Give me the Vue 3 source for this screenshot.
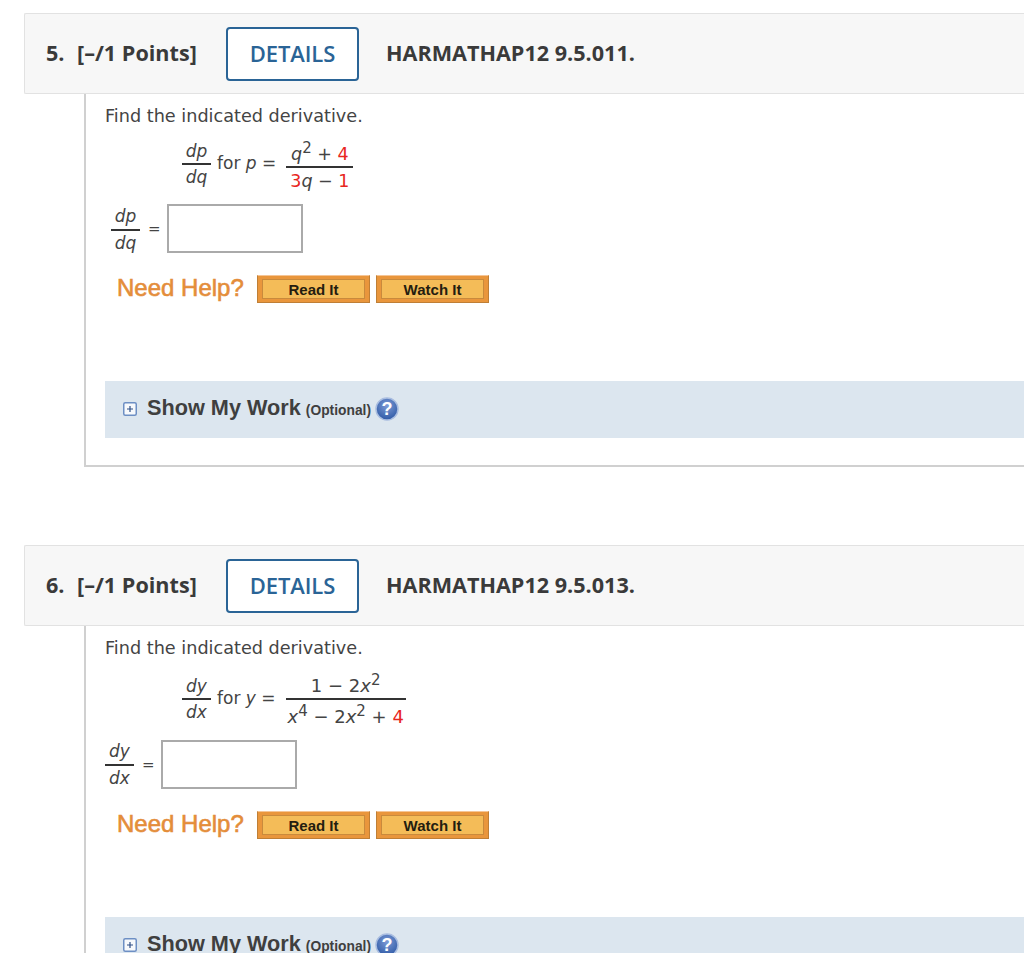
<script setup>
const questions = [
  {
    num: '5.', code: 'HARMATHAP12 9.5.011.', top: 'dp', bottom: 'dq', name: 'p',
    numer: '<i>q</i><sup>2</sup> + <b>4</b>', denom: '<b>3</b><i>q</i> − <b>1</b>',
    indent: 'q-five'
  },
  {
    num: '6.', code: 'HARMATHAP12 9.5.013.', top: 'dy', bottom: 'dx', name: 'y',
    numer: '1 − 2<i>x</i><sup>2</sup>', denom: '<i>x</i><sup>4</sup> − 2<i>x</i><sup>2</sup> + <b>4</b>',
    indent: 'q-six'
  }
]
</script>

<template>
  <div class="page">
    <section v-for="q in questions" :key="q.num" class="question" :class="q.indent">
      <header class="head">
        <span class="num">{{ q.num }}</span>
        <span class="points">[–/1 Points]</span>
        <a class="details">DETAILS</a>
        <span class="code">{{ q.code }}</span>
      </header>
      <div class="body">
        <p class="prompt">Find the indicated derivative.</p>
        <div class="math">
          <span class="frac small">
            <span class="n"><i>{{ q.top }}</i></span>
            <span class="d"><i>{{ q.bottom }}</i></span>
          </span>
          <span class="for">for <i>{{ q.name }}</i> =</span>
          <span class="frac big">
            <span class="n" v-html="q.numer"></span>
            <span class="d" v-html="q.denom"></span>
          </span>
        </div>
        <div class="answer">
          <span class="frac small">
            <span class="n"><i>{{ q.top }}</i></span>
            <span class="d"><i>{{ q.bottom }}</i></span>
          </span>
          <span class="eq">=</span>
          <span class="field"></span>
        </div>
        <div class="help">
          <span class="need">Need Help?</span>
          <a class="btn read"><span>Read It</span></a>
          <a class="btn watch"><span>Watch It</span></a>
        </div>
        <div class="work">
          <svg class="plus" width="14" height="14" viewBox="0 0 14 14">
            <rect x="0.75" y="0.75" width="12.5" height="12.5" rx="1.5" fill="#f7f9fc" stroke="#6d8fc4" stroke-width="1.5" />
            <path d="M4 7h6M7 4v6" stroke="#2f4f86" stroke-width="1.2" fill="none" />
          </svg>
          <span class="show">Show My Work</span>
          <span class="opt">(Optional)</span>
          <svg class="qm" width="24" height="24" viewBox="0 0 24 24">
            <defs>
              <radialGradient id="qg" cx="50%" cy="35%" r="65%">
                <stop offset="0" stop-color="#7d9bd6" />
                <stop offset="1" stop-color="#2f5aa6" />
              </radialGradient>
            </defs>
            <circle cx="12" cy="12" r="11" fill="url(#qg)" stroke="#a9bde0" stroke-width="1.5" />
            <text x="12" y="18" text-anchor="middle" class="qmark">?</text>
          </svg>
        </div>
      </div>
    </section>
  </div>
</template>

<style>
html, body { margin: 0; overflow: hidden; background: #fff; }
</style>

<style scoped>
.page {
  width: 1024px;
  height: 953px;
  overflow: hidden;
  padding-top: 13px;
  box-sizing: border-box;
  background: #fff;
}
.question { margin-bottom: 78px; }
.head {
  margin-left: 24px;
  height: 81px;
  box-sizing: border-box;
  background: #f7f7f7;
  border: 1px solid #e2e2e2;
  border-right: 0;
  border-radius: 2px 0 0 2px;
  display: flex;
  align-items: center;
  padding-left: 21px;
  font-family: "Open Sans", sans-serif;
  font-weight: 700;
  font-size: 21.6px;
  color: #3a3a3a;
}
.num, .points, .code { margin-top: -2px; }
.num { width: 31px; }
.points { width: 149px; }
.details {
  width: 133px;
  height: 54px;
  box-sizing: border-box;
  border: 2px solid #2a6496;
  border-radius: 4px;
  background: #fff;
  color: #2a6496;
  display: flex;
  align-items: center;
  justify-content: center;
  margin-right: 27px;
  padding-bottom: 2px;
  font-size: 22px;
  font-weight: 600;
  letter-spacing: -0.1px;
}
.body {
  margin-left: 84px;
  height: 373px;
  box-sizing: border-box;
  border-left: 2px solid #d0d0d0;
  border-bottom: 2px solid #d0d0d0;
  padding-left: 19px;
  font-family: "DejaVu Sans", sans-serif;
  color: #444;
}
.prompt {
  margin: 0;
  padding-top: 11px;
  font-size: 17.65px;
  line-height: 22px;
}
.math {
  display: flex;
  align-items: flex-start;
  margin-top: 12px;
  margin-left: 77px;
  font-size: 17px;
  height: 53px;
}
.q-six .math { margin-top: 13px; padding-top: 2px; height: 54px; }
.frac {
  display: inline-flex;
  flex-direction: column;
  align-items: center;
  text-align: center;
  white-space: nowrap;
  line-height: 24px;
}
.frac .n { border-bottom: 2px solid #333; padding: 0 2px; width: 100%; box-sizing: border-box; }
.frac.small { font-size: 17px; width: 29px; }
.math .frac.small .d { line-height: 25px; }
.frac.big { font-size: 17.5px; margin-left: 10px; margin-top: 3px; }
.frac.big .n, .frac.big .d { padding: 0 4px; }
.frac.big .d { line-height: 26px; }
.q-six .frac.big { font-size: 18px; margin-top: 0; }
.q-six .frac.big .n, .q-six .frac.big .d { padding: 0 2px; }
.q-six .frac.big .d { padding-top: 4px; }
.frac :deep(b) { font-weight: 400; color: #e8261e; }
.frac :deep(sup) { font-size: 15px; line-height: 0; vertical-align: 7px; }
.for { margin-left: 6px; font-size: 17px; margin-top: 14px; }
.answer {
  display: flex;
  align-items: center;
  margin-top: 12px;
  height: 49px;
  font-size: 16px;
}
.answer .frac { line-height: 25px; margin-top: 2px; }
.q-six .answer .frac { margin-top: 0; }
.q-five .answer { padding-left: 6px; }
.eq { margin: 0 6px 0 8px; font-size: 15px; }
.field {
  width: 136px;
  height: 49px;
  box-sizing: border-box;
  border: 2px solid #aaa;
  background: #fff;
}
.help {
  display: flex;
  align-items: center;
  margin-top: 22px;
  margin-left: 12px;
  height: 28px;
  font-family: "Liberation Sans", sans-serif;
}
.need {
  font-size: 24px;
  color: #e48d3a;
  width: 140px;
  margin-top: -2px;
  -webkit-text-stroke: 0.6px #e48d3a;
}
.btn {
  height: 28px;
  box-sizing: border-box;
  background: #e9963c;
  border: 1px solid #bf7f36;
  border-top-color: #f5c596;
  padding: 3px 4px;
  display: flex;
  margin-right: 6px;
  width: 113px;
}
.btn span {
  flex: 1;
  display: flex;
  align-items: center;
  justify-content: center;
  background: #f4bc58;
  border: 1px solid #c98a3c;
  font-size: 15px;
  font-weight: 700;
  color: #241d10;
}
.work {
  margin-top: 78px;
  height: 57px;
  background: #dce6ef;
  display: flex;
  align-items: center;
  padding-left: 18px;
  font-family: "Liberation Sans", sans-serif;
  color: #3f3f3f;
}
.plus { flex: none; margin-top: -1px; }
.show { font-size: 21.7px; font-weight: 700; margin-left: 10px; margin-top: -3px; }
.opt { font-size: 13.8px; font-weight: 700; margin-left: 5px; margin-top: 2px; }
.qm { margin-left: 4px; flex: none; margin-top: -1px; }
.qmark { font-family: "Liberation Sans", sans-serif; font-size: 18px; font-weight: 700; fill: #fff; }
</style>
